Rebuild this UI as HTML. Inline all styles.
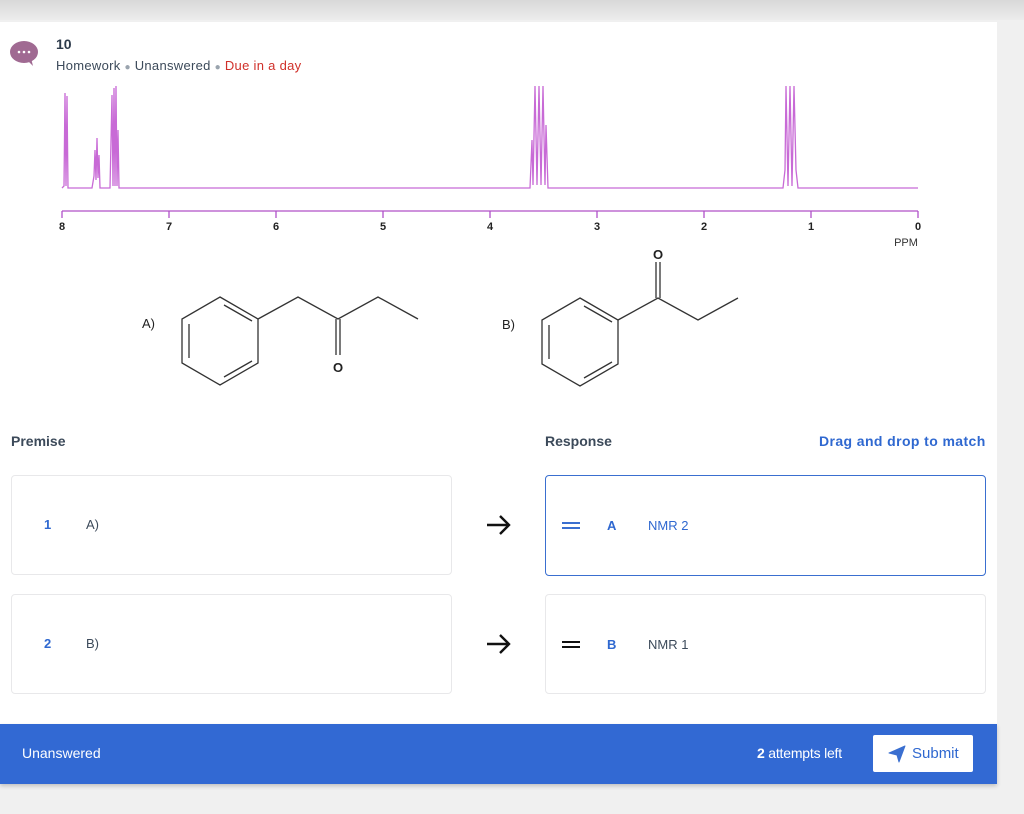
<!DOCTYPE html>
<html><head><meta charset="utf-8"><style>
*{margin:0;padding:0;box-sizing:border-box}
body{width:1024px;height:814px;background:#f0f0f0;font-family:"Liberation Sans",sans-serif;position:relative;overflow:hidden}
.top{position:absolute;left:0;top:0;width:1024px;height:20px;background:linear-gradient(#d8d8d8,#ececec)}
.card{position:absolute;left:0;top:22px;width:997px;height:762px;background:#fff}
.abs{position:absolute}
.t{color:#3c4a5a;font-size:13px}
.box{position:absolute;border:1px solid #e8e8ea;border-radius:4px;background:#fff}
.bar{position:absolute;left:0;top:724px;width:997px;height:60px;background:#3269d3;box-shadow:0 2px 4px rgba(0,0,0,.2)}
</style></head><body>
<div class="top"></div>
<div class="card"></div>
<svg class="abs" style="left:9px;top:40px" width="30" height="28"><ellipse cx="15" cy="12" rx="14" ry="11" fill="#a06a92"/><path d="M18 20 L24 26 L22 18Z" fill="#a06a92"/><circle cx="10" cy="12" r="1.3" fill="#fff"/><circle cx="15" cy="12" r="1.3" fill="#fff"/><circle cx="20" cy="12" r="1.3" fill="#fff"/></svg>
<div class="abs" style="left:56px;top:36px;font-size:14px;font-weight:bold;color:#2c3a4a">10</div>
<div class="abs t" style="left:56px;top:58px;font-size:13px;letter-spacing:0.3px">Homework <span style="color:#9aa4ae;font-size:10px">&#9679;</span> Unanswered <span style="color:#9aa4ae;font-size:10px">&#9679;</span> <span style="color:#d0302a">Due in a day</span></div>

<svg class="abs" style="left:0;top:0" width="1000" height="400">
<g fill="none" stroke="#c86ad6" stroke-width="1.3">
<polyline points="62,188 64,186 65,93 66,186 67,96 68,188 92,188 94,176 95,150 96,180 97,138 98,178 99,155 100,188 110,188 112,95 113,186 114,88 115,186 116,86 117,186 118,130 119,188 530,188 532,140 533,185 535,86 537,185 539,86 541,185 543,86 545,185 546,125 548,188 783,188 785,170 786,86 788,186 790,86 792,186 794,86 796,170 798,188 918,188"/>
</g>
<g stroke="#b050c8" stroke-width="1.3">
<line x1="62" y1="211" x2="918" y2="211"/>
<line x1="62" y1="211" x2="62" y2="218"/><line x1="169" y1="211" x2="169" y2="218"/><line x1="276" y1="211" x2="276" y2="218"/><line x1="383" y1="211" x2="383" y2="218"/><line x1="490" y1="211" x2="490" y2="218"/><line x1="597" y1="211" x2="597" y2="218"/><line x1="704" y1="211" x2="704" y2="218"/><line x1="811" y1="211" x2="811" y2="218"/><line x1="918" y1="211" x2="918" y2="218"/>
</g>
<g font-family="Liberation Sans" font-size="11" fill="#222" text-anchor="middle" font-weight="bold">
<text x="62" y="230">8</text><text x="169" y="230">7</text><text x="276" y="230">6</text><text x="383" y="230">5</text><text x="490" y="230">4</text><text x="597" y="230">3</text><text x="704" y="230">2</text><text x="811" y="230">1</text><text x="918" y="230">0</text></g>
<text x="906" y="246" font-family="Liberation Sans" font-size="11" fill="#333" text-anchor="middle">PPM</text>
<g fill="none" stroke="#333" stroke-width="1.3">
<polygon points="220,297 258,319 258,363 220,385 182,363 182,319"/>
<line x1="189" y1="324" x2="189" y2="358"/><line x1="224" y1="305" x2="252" y2="321"/><line x1="224" y1="377" x2="252" y2="361"/>
<polyline points="258,319 298,297 338,319 378,297 418,319"/>
<line x1="336" y1="319" x2="336" y2="355"/><line x1="340" y1="319" x2="340" y2="355"/>
<polygon points="580,298 618,320 618,364 580,386 542,364 542,320"/>
<line x1="549" y1="325" x2="549" y2="359"/><line x1="584" y1="306" x2="612" y2="322"/><line x1="584" y1="378" x2="612" y2="362"/>
<polyline points="618,320 658,298 698,320 738,298"/>
<line x1="656" y1="298" x2="656" y2="262"/><line x1="660" y1="298" x2="660" y2="262"/>
</g>
<g font-family="Liberation Sans" font-size="13" fill="#222" font-weight="bold" text-anchor="middle">
<text x="338" y="372">O</text><text x="658" y="259">O</text>
</g>
<g font-family="Liberation Sans" font-size="13" fill="#222"><text x="142" y="328">A)</text><text x="502" y="329">B)</text></g>
</svg>

<div class="abs" style="left:11px;top:433px;font-size:14px;font-weight:bold;color:#3c4a5a">Premise</div>
<div class="abs" style="left:545px;top:433px;font-size:14px;font-weight:bold;color:#3c4a5a">Response</div>
<div class="abs" style="left:819px;top:433px;font-size:14px;font-weight:bold;color:#2f68d0;letter-spacing:0.4px">Drag and drop to match</div>

<div class="box" style="left:11px;top:475px;width:441px;height:100px"></div>
<div class="box" style="left:11px;top:594px;width:441px;height:100px"></div>
<div class="abs" style="left:44px;top:517px;font-size:13px;font-weight:bold;color:#2f68d0">1</div>
<div class="abs t" style="left:86px;top:517px">A)</div>
<div class="abs" style="left:44px;top:636px;font-size:13px;font-weight:bold;color:#2f68d0">2</div>
<div class="abs t" style="left:86px;top:636px">B)</div>

<svg class="abs" style="left:485px;top:513px" width="28" height="24"><path d="M2 12 H24 M15 3 L24 12 L15 21" fill="none" stroke="#111" stroke-width="2.4"/></svg>
<svg class="abs" style="left:485px;top:632px" width="28" height="24"><path d="M2 12 H24 M15 3 L24 12 L15 21" fill="none" stroke="#111" stroke-width="2.4"/></svg>

<div class="box" style="left:545px;top:475px;width:441px;height:101px;border-color:#3a6fd0"></div>
<div class="box" style="left:545px;top:594px;width:441px;height:100px"></div>
<div class="abs" style="left:562px;top:522px;width:18px;height:2px;background:#3a6fd0;box-shadow:0 5px 0 #3a6fd0"></div>
<div class="abs" style="left:607px;top:518px;font-size:13px;font-weight:bold;color:#2f68d0">A</div>
<div class="abs" style="left:648px;top:518px;font-size:13px;color:#2f68d0">NMR 2</div>
<div class="abs" style="left:562px;top:641px;width:18px;height:2px;background:#111;box-shadow:0 5px 0 #111"></div>
<div class="abs" style="left:607px;top:637px;font-size:13px;font-weight:bold;color:#2f68d0">B</div>
<div class="abs t" style="left:648px;top:637px">NMR 1</div>

<div class="bar"></div>
<div class="abs" style="left:22px;top:745px;font-size:14px;color:#fff">Unanswered</div>
<div class="abs" style="left:757px;top:745px;font-size:14px;color:#fff;letter-spacing:-0.2px"><b>2</b> attempts left</div>
<div class="abs" style="left:873px;top:735px;width:100px;height:37px;background:#fff;border-radius:2px"></div>
<svg class="abs" style="left:887px;top:744px" width="20" height="20"><path d="M2 9 L18 2 L12 18 L10 11 Z M10 11 L18 2" fill="#3a6fd0" stroke="#3a6fd0" stroke-width="1" stroke-linejoin="round"/></svg>
<div class="abs" style="left:912px;top:745px;font-size:15px;color:#2f68d0">Submit</div>
</body></html>
